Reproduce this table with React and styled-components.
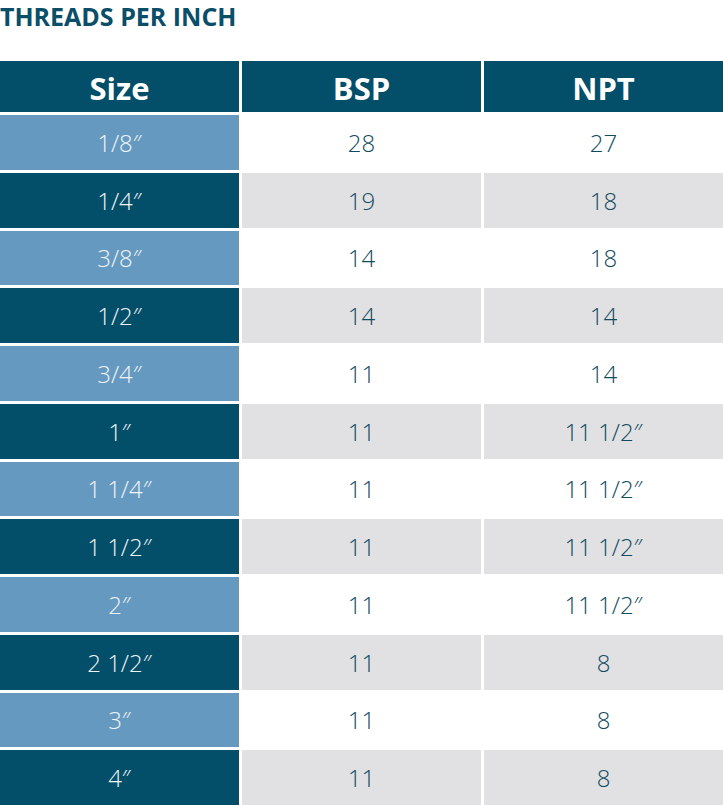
import React from "react";
import styled, { createGlobalStyle } from "styled-components";

const Global = createGlobalStyle`
  html, body { margin: 0; padding: 0; background: #ffffff; }
  body { font-family: "Open Sans", "Liberation Sans", sans-serif; }
`;

const Page = styled.div`
  width: 723px;
  height: 805px;
  display: flex;
  flex-direction: column;
  overflow: hidden;
`;

const Title = styled.h1`
  margin: 0;
  height: 61px;
  padding-top: 0;
  box-sizing: border-box;
  font-family: "Open Sans", "Liberation Sans", sans-serif;
  font-weight: 700;
  font-size: 25px;
  line-height: 32px;
  color: #0a4e68;
  letter-spacing: 0;
`;

const Table = styled.div`
  flex: 1;
  display: grid;
  grid-template-columns: 239px 239px 239px;
  grid-template-rows: 51px repeat(12, 1fr);
  column-gap: 3px;
  row-gap: 3px;
`;

const HeadCell = styled.div`
  background: #034e68;
  color: #ffffff;
  display: flex;
  align-items: center;
  justify-content: center;
  font-weight: 700;
  font-size: 31px;
  padding-top: 2px;
`;

const SizeCell = styled.div`
  background: ${(p) => (p.$alt ? "#034e68" : "#6699bf")};
  color: #eef4f8;
  display: flex;
  align-items: center;
  justify-content: center;
  font-weight: 300;
  font-size: 24px;
`;

const DataCell = styled.div`
  background: ${(p) => (p.$alt ? "#e1e1e3" : "#ffffff")};
  color: #124b60;
  display: flex;
  align-items: center;
  justify-content: center;
  font-weight: 300;
  font-size: 24px;
`;

const rows = [
  ["1/8\u2033", "28", "27"],
  ["1/4\u2033", "19", "18"],
  ["3/8\u2033", "14", "18"],
  ["1/2\u2033", "14", "14"],
  ["3/4\u2033", "11", "14"],
  ["1\u2033", "11", "11 1/2\u2033"],
  ["1 1/4\u2033", "11", "11 1/2\u2033"],
  ["1 1/2\u2033", "11", "11 1/2\u2033"],
  ["2\u2033", "11", "11 1/2\u2033"],
  ["2 1/2\u2033", "11", "8"],
  ["3\u2033", "11", "8"],
  ["4\u2033", "11", "8"],
];

export default function App() {
  return (
    <Page>
      <Global />
      <Title>THREADS PER INCH</Title>
      <Table>
        <HeadCell>Size</HeadCell>
        <HeadCell>BSP</HeadCell>
        <HeadCell>NPT</HeadCell>
        {rows.map((r, i) => (
          <React.Fragment key={i}>
            <SizeCell $alt={i % 2 === 1}>{r[0]}</SizeCell>
            <DataCell $alt={i % 2 === 1}>{r[1]}</DataCell>
            <DataCell $alt={i % 2 === 1}>{r[2]}</DataCell>
          </React.Fragment>
        ))}
      </Table>
    </Page>
  );
}
